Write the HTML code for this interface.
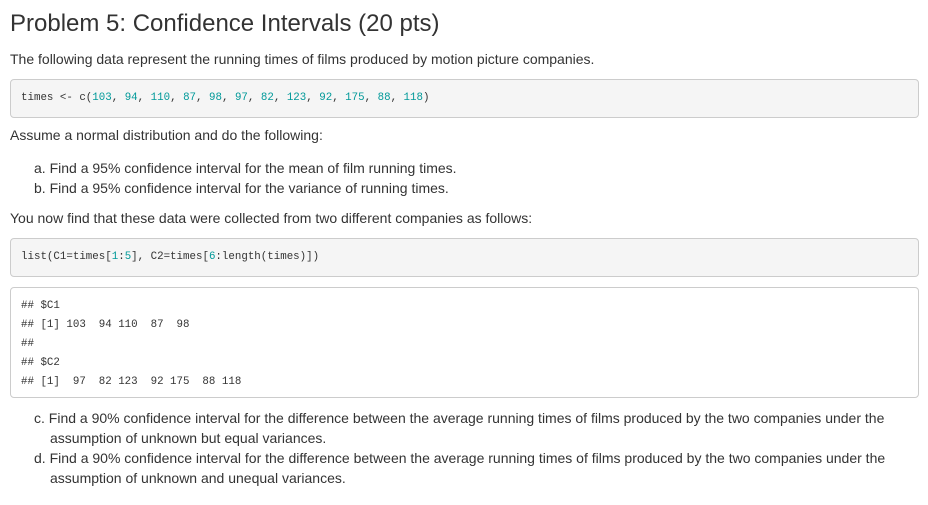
<!DOCTYPE html>
<html><head><style>
body{margin:0;background:#fff;font-family:"Liberation Sans",sans-serif;font-size:14px;color:#333;width:928px;height:505px;overflow:hidden;position:relative}
.a{position:absolute;white-space:nowrap;line-height:20px}
h1{position:absolute;left:10px;top:10px;margin:0;font-size:24px;font-weight:normal;color:#333;line-height:28px}
.box{position:absolute;left:10px;width:907px;border:1px solid #ccc;border-radius:4px;background:#f5f5f5}
.code{position:absolute;left:21px;font-family:"Liberation Mono",monospace;font-size:10.8px;line-height:19px;white-space:pre;color:#333}
.n{color:#099}
</style></head><body>
<h1>Problem 5: Confidence Intervals (20 pts)</h1>
<div class="a" style="left:10px;top:49px">The following data represent the running times of films produced by motion picture companies.</div>
<div class="box" style="top:79px;height:37px"></div>
<div class="code" style="top:89px">times &lt;- c(<span class="n">103</span>, <span class="n">94</span>, <span class="n">110</span>, <span class="n">87</span>, <span class="n">98</span>, <span class="n">97</span>, <span class="n">82</span>, <span class="n">123</span>, <span class="n">92</span>, <span class="n">175</span>, <span class="n">88</span>, <span class="n">118</span>)</div>
<div class="a" style="left:10px;top:125px">Assume a normal distribution and do the following:</div>
<div class="a" style="left:34px;top:158px">a. Find a 95% confidence interval for the mean of film running times.</div>
<div class="a" style="left:34px;top:178px">b. Find a 95% confidence interval for the variance of running times.</div>
<div class="a" style="left:10px;top:208px">You now find that these data were collected from two different companies as follows:</div>
<div class="box" style="top:238px;height:37px"></div>
<div class="code" style="top:248px">list(C1=times[<span class="n">1</span>:<span class="n">5</span>], C2=times[<span class="n">6</span>:length(times)])</div>
<div class="box" style="top:287px;height:109px;background:#fff"></div>
<div class="code" style="top:297px">## $C1
## [1] 103  94 110  87  98
## 
## $C2
## [1]  97  82 123  92 175  88 118</div>
<div class="a" style="left:34px;top:408px">c. Find a 90% confidence interval for the difference between the average running times of films produced by the two companies under the</div>
<div class="a" style="left:50px;top:428px">assumption of unknown but equal variances.</div>
<div class="a" style="left:34px;top:448px">d. Find a 90% confidence interval for the difference between the average running times of films produced by the two companies under the</div>
<div class="a" style="left:50px;top:468px">assumption of unknown and unequal variances.</div>
</body></html>
